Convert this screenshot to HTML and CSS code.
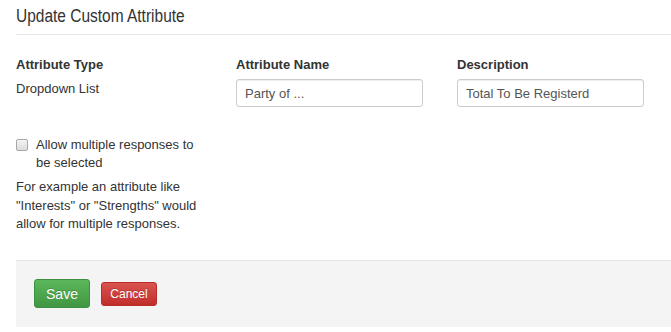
FILE: index.html
```html
<!DOCTYPE html>
<html>
<head>
<meta charset="utf-8">
<link rel="stylesheet" href="styles.css">
</head>
<body>
<div class="page">
  <div class="header">
    <h4 class="title">Update Custom Attribute</h4>
  </div>
  <div class="content">
    <div class="row">
      <div class="col">
        <label class="lbl">Attribute Type</label>
        <div class="value">Dropdown List</div>
      </div>
      <div class="col">
        <label class="lbl">Attribute Name</label>
        <input class="input" type="text" value="Party of ...">
      </div>
      <div class="col">
        <label class="lbl">Description</label>
        <input class="input" type="text" value="Total To Be Registerd">
      </div>
    </div>
    <div class="options">
      <label class="check">
        <span class="box"></span>
        <span class="check-text">Allow multiple responses to be selected</span>
      </label>
      <p class="help">For example an attribute like "Interests" or "Strengths" would allow for multiple responses.</p>
    </div>
  </div>
  <div class="footer">
    <button class="btn btn-save" type="button">Save</button>
    <button class="btn btn-cancel" type="button">Cancel</button>
  </div>
</div>
</body>
</html>
```
FILE: styles.css
```css
html, body {
  margin: 0;
  padding: 0;
  background: #fff;
}
body {
  font-family: "Liberation Sans", Arial, sans-serif;
  font-size: 13px;
  color: #333;
  line-height: 18px;
}
.page {
  padding-left: 16px;
}
.header {
  border-bottom: 1px solid #e5e5e5;
  height: 35px;
  box-sizing: border-box;
}
.title {
  display: inline-block;
  margin: 0;
  padding-top: 5px;
  font-size: 18px;
  font-weight: normal;
  line-height: 22px;
  color: #333;
  transform: scaleX(0.86);
  transform-origin: left center;
}
.content {
  padding-top: 21px;
}
.row {
  display: grid;
  grid-template-columns: 220px 221px 187px;
}
.lbl {
  display: block;
  font-weight: bold;
  font-size: 13px;
  line-height: 18px;
  margin-bottom: 6px;
}
.value {
  line-height: 18px;
}
.input {
  display: block;
  box-sizing: border-box;
  width: 187px;
  height: 28px;
  padding: 4px 8px;
  border: 1px solid #ccc;
  border-radius: 3px;
  font-family: "Liberation Sans", Arial, sans-serif;
  font-size: 13px;
  color: #555;
  box-shadow: inset 0 1px 1px rgba(0,0,0,.075);
  margin-top: -1px;
}
.options {
  width: 192px;
  padding-top: 29px;
}
.check {
  display: flex;
  gap: 8px;
}
.box {
  flex: none;
  width: 10px;
  height: 10px;
  margin-top: 3px;
  border: 1px solid #a9a9a9;
  border-radius: 2px;
  background: linear-gradient(#f4f4f4, #dcdcdc);
}
.check-text {
  width: 170px;
}
.help {
  margin: 6px 0 0;
  line-height: 18.5px;
}
.footer {
  margin-top: 26px;
  height: 67px;
  box-sizing: border-box;
  background: #f4f4f4;
  border-top: 1px solid #e5e5e5;
  display: flex;
  align-items: center;
  gap: 11px;
  padding-left: 18px;
}
.btn {
  font-family: "Liberation Sans", Arial, sans-serif;
  color: #fff;
  border-radius: 3px;
  cursor: pointer;
  padding: 0;
}
.btn-save {
  width: 56px;
  height: 29px;
  font-size: 14px;
  border: 1px solid #3e8f3e;
  background: linear-gradient(#5cb85c, #419641);
  text-shadow: 0 -1px 0 rgba(0,0,0,.2);
}
.btn-cancel {
  width: 56px;
  height: 24px;
  font-size: 12px;
  border: 1px solid #b92c28;
  background: linear-gradient(#d9534f, #c12e2a);
  text-shadow: 0 -1px 0 rgba(0,0,0,.2);
}
```
